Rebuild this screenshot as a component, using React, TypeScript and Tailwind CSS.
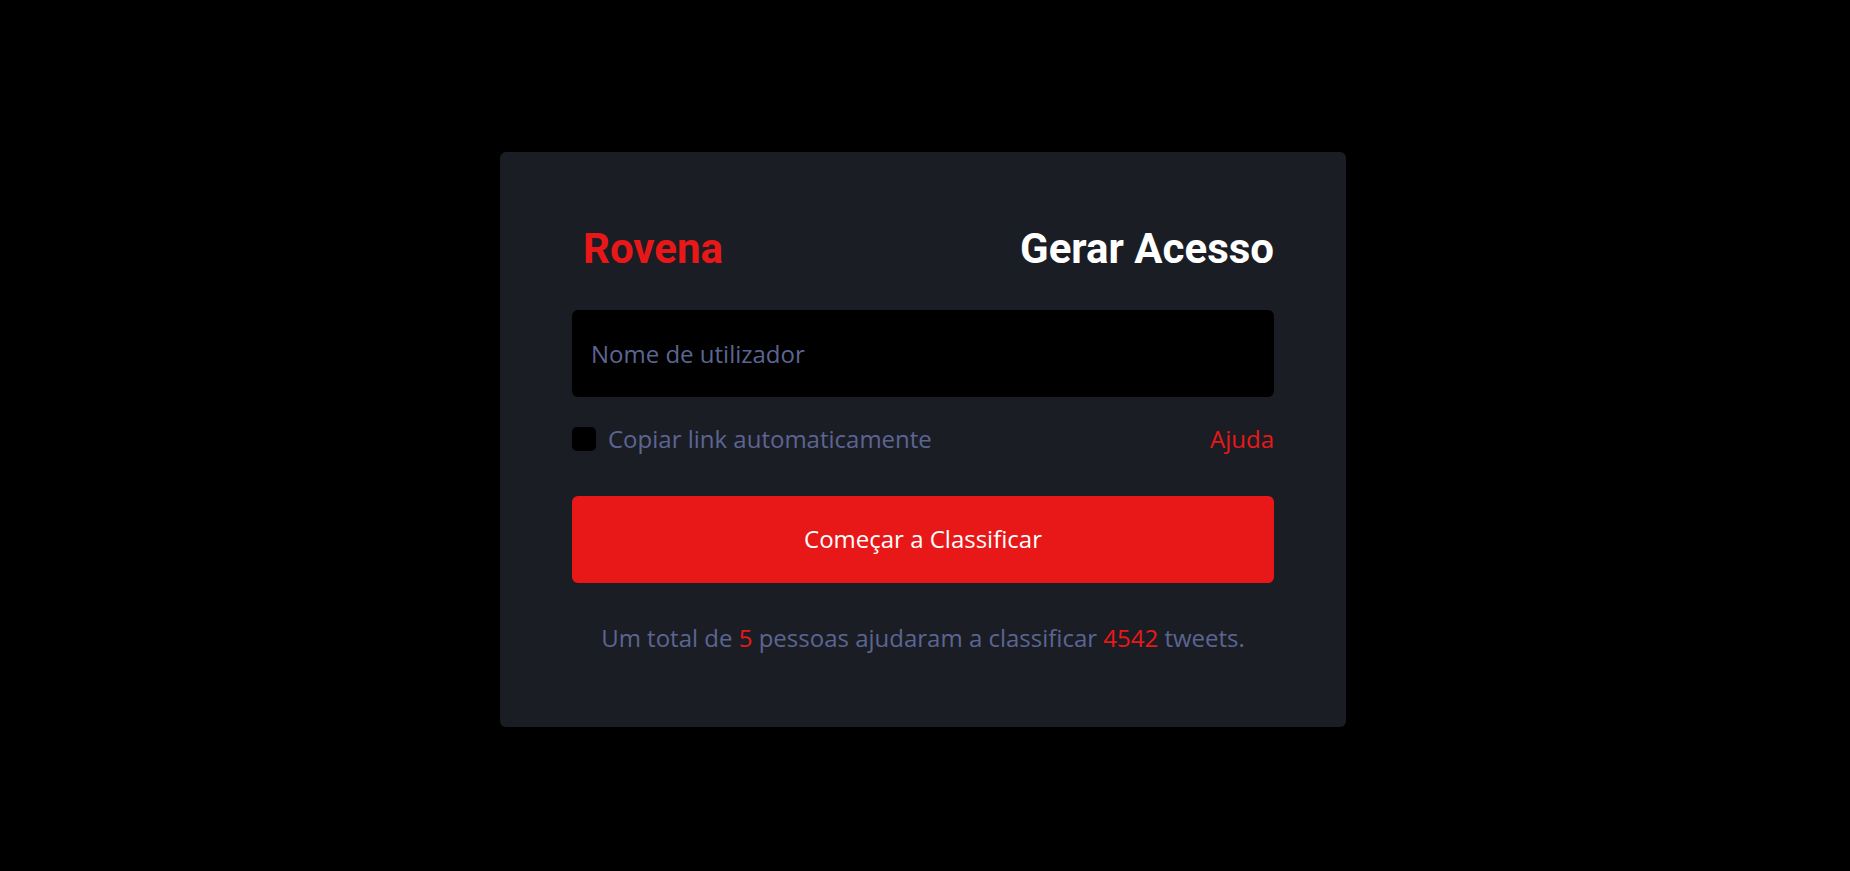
import React from "react";

export default function App() {
  return (
    <div className="min-h-screen w-full bg-black flex items-center justify-center pt-[7px] pr-[4px]" style={{ fontFamily: '"Open Sans", sans-serif' }}>
      <div className="w-[846px] rounded-[6px] bg-[#1b1d25] p-[72px] flex flex-col">
        <div className="flex items-center justify-between" style={{ fontFamily: 'Roboto, sans-serif' }}>
          <h1 className="ml-[11px] text-[42px] font-bold leading-[49px] text-[#e91818]">Rovena</h1>
          <h2 className="text-[42px] font-bold leading-[49px] text-white">Gerar Acesso</h2>
        </div>
        <input
          type="text"
          placeholder="Nome de utilizador"
          className="mt-[37px] h-[87px] w-full rounded-[6px] bg-black px-[19px] text-[24px] text-white outline-none placeholder:text-[#5c6592]"
        />
        <div className="mt-[30px] flex items-center justify-between h-[24px]">
          <label className="flex items-center gap-[12px] text-[24px] text-[#5c6592]">
            <span className="block h-[24px] w-[24px] rounded-[5px] bg-black" />
            <span>Copiar link automaticamente</span>
          </label>
          <a className="text-[24px] text-[#e91818]">Ajuda</a>
        </div>
        <button className="mt-[45px] h-[87px] w-full rounded-[6px] bg-[#e91818] text-[24px] text-white">
          Começar a Classificar
        </button>
        <p className="mt-[38px] text-center text-[24px] leading-[34px] text-[#5c6592]">
          Um total de <span className="text-[#e91818]">5</span> pessoas ajudaram a classificar{" "}
          <span className="text-[#e91818]">4542</span> tweets.
        </p>
      </div>
    </div>
  );
}
